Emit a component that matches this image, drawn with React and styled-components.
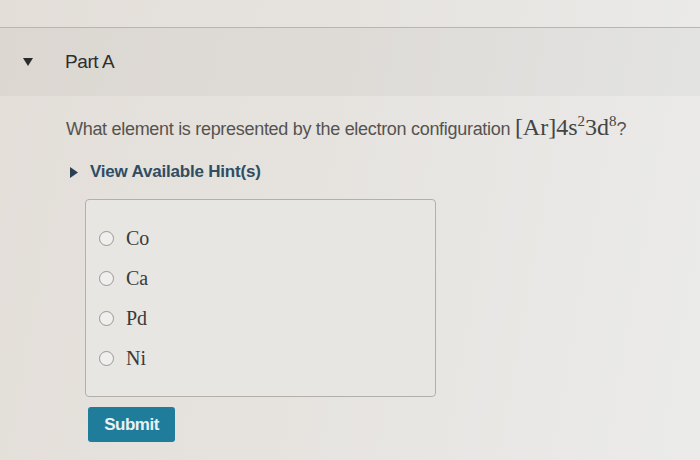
import React from "react";
import styled, { createGlobalStyle } from "styled-components";

const GlobalStyle = createGlobalStyle`
  html, body {
    margin: 0;
    padding: 0;
  }
  body {
    font-family: "Liberation Sans", Arial, sans-serif;
    background: #e4e1dd;
  }
`;

const options = ["Co", "Ca", "Pd", "Ni"];

function App() {
  return (
    <>
      <GlobalStyle />
      <Page>
        <TopStrip />
        <PartHeader>
          <Caret viewBox="0 0 10 8">
            <path d="M0 0 L10 0 L5 8 Z" fill="#2b2b2b" />
          </Caret>
          <PartTitle>Part A</PartTitle>
        </PartHeader>
        <Body>
          <Question>
            What element is represented by the electron configuration{" "}
            <Formula>
              [Ar]4s<sup>2</sup>3d<sup>8</sup>
            </Formula>
            ?
          </Question>
          <HintLink>
            <svg width="8" height="11" viewBox="0 0 8 11">
              <path d="M0 0 L8 5.5 L0 11 Z" fill="#2a3f52" />
            </svg>
            View Available Hint(s)
          </HintLink>
          <AnswerBox>
            {options.map((o) => (
              <OptionRow key={o}>
                <Radio />
                <OptionLabel>{o}</OptionLabel>
              </OptionRow>
            ))}
          </AnswerBox>
          <SubmitButton>Submit</SubmitButton>
        </Body>
      </Page>
    </>
  );
}

export default App;

const Page = styled.div`
  width: 700px;
  height: 460px;
  overflow: hidden;
  background: linear-gradient(100deg, #e3ded8 0%, #e6e3df 45%, #ebebea 100%);
`;

const TopStrip = styled.div`
  height: 27px;
  border-bottom: 1px solid #b9b6b2;
`;

const PartHeader = styled.div`
  height: 68px;
  display: flex;
  align-items: center;
  padding-left: 23px;
  gap: 32px;
  background: linear-gradient(100deg, #dcd7d1 0%, #dedbd7 50%, #e3e3e2 100%);
`;

const Caret = styled.svg`
  width: 10px;
  height: 8px;
`;

const PartTitle = styled.span`
  font-size: 19px;
  color: #2e2e2e;
  letter-spacing: -0.4px;
`;

const Body = styled.div`
  padding: 17px 0 0 66px;
  display: flex;
  flex-direction: column;
  align-items: flex-start;
`;

const Question = styled.div`
  font-size: 18px;
  color: #555350;
  letter-spacing: -0.3px;
  line-height: 28px;
`;

const Formula = styled.span`
  font-family: "Liberation Serif", "Times New Roman", serif;
  font-size: 24px;
  color: #444;
  letter-spacing: 0;

  sup {
    font-size: 15px;
    line-height: 0;
  }
`;

const HintLink = styled.div`
  margin-top: 19px;
  margin-left: 4px;
  display: flex;
  align-items: center;
  gap: 12px;
  font-size: 17px;
  font-weight: bold;
  color: #2f4d63;
  letter-spacing: -0.2px;
`;

const AnswerBox = styled.div`
  margin-top: 17px;
  margin-left: 19px;
  width: 351px;
  height: 198px;
  border: 1px solid #b3b0ac;
  border-radius: 4px;
  padding: 26px 0 0 13px;
  box-sizing: border-box;
  display: flex;
  flex-direction: column;
  gap: 16px;
  background: #e8e6e3;
`;

const OptionRow = styled.div`
  display: flex;
  align-items: center;
  gap: 12px;
  height: 24px;
`;

const Radio = styled.span`
  width: 13px;
  height: 13px;
  border: 1.5px solid #9a9895;
  border-radius: 50%;
  background: #f0efed;
`;

const OptionLabel = styled.span`
  font-family: "Liberation Serif", "Times New Roman", serif;
  font-size: 20px;
  color: #3a3a3a;
`;

const SubmitButton = styled.button`
  margin-top: 10px;
  margin-left: 22px;
  width: 87px;
  height: 35px;
  border: 0;
  border-radius: 3px;
  background: #1f7d9b;
  color: #e8f2f5;
  font-family: "Liberation Sans", Arial, sans-serif;
  font-size: 17px;
  font-weight: bold;
  letter-spacing: -0.5px;
`;
